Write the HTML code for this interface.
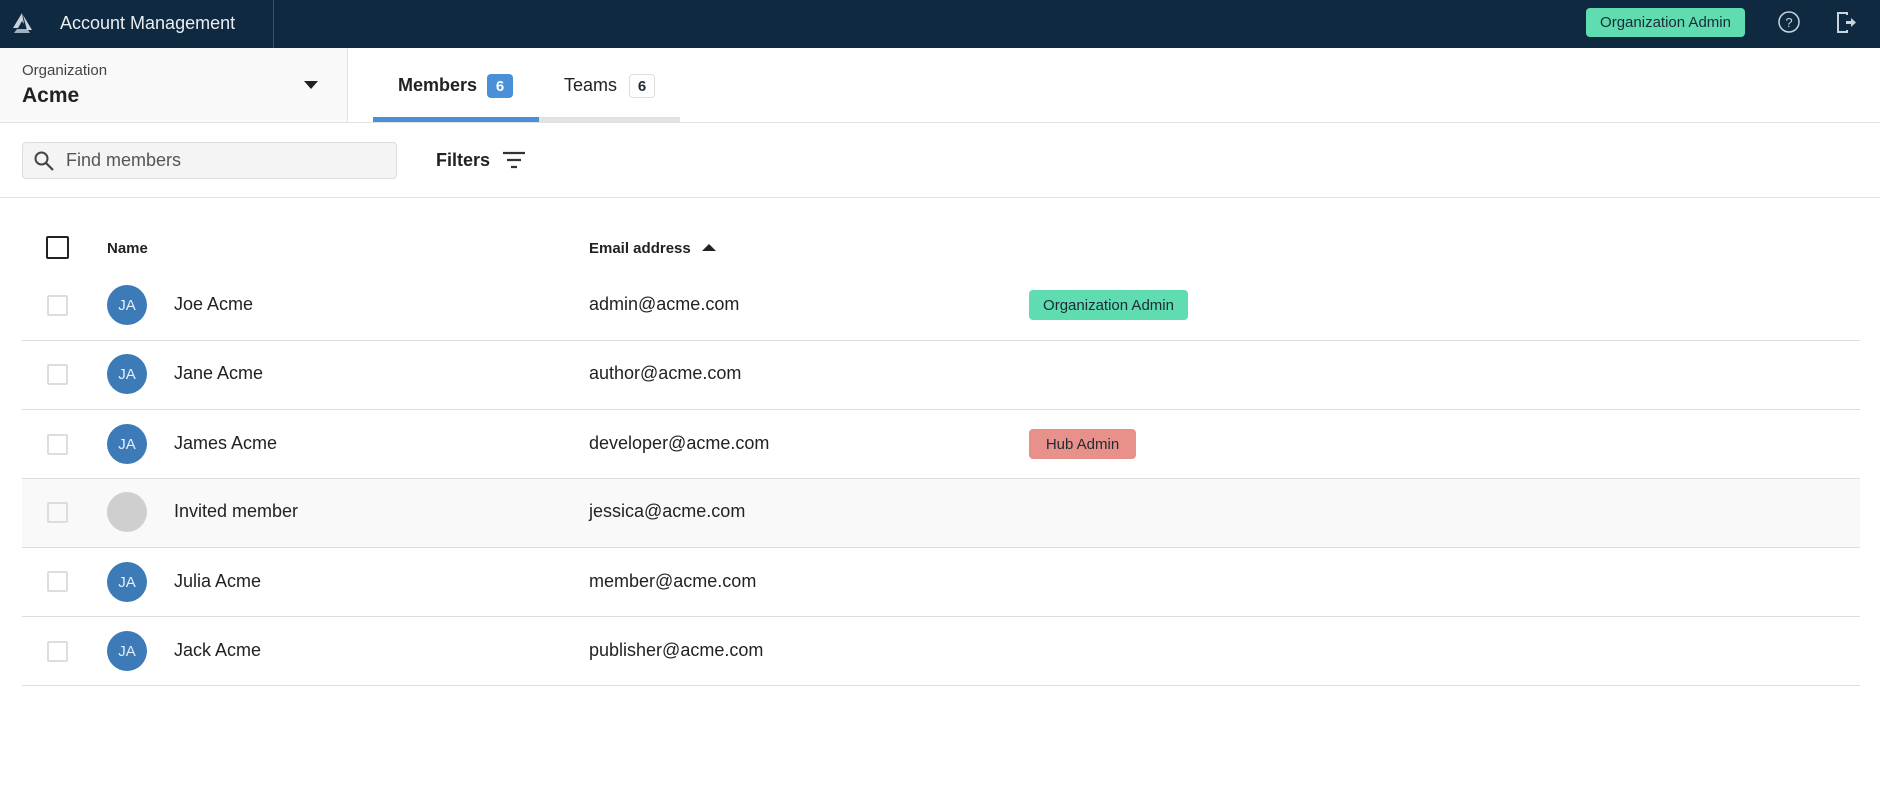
<!DOCTYPE html>
<html><head><meta charset="utf-8"><style>
*{box-sizing:border-box;margin:0;padding:0}
body{width:1880px;height:786px;background:#fff;font-family:"Liberation Sans",sans-serif;color:#222;position:relative;overflow:hidden}
.a{position:absolute}
.hdr{left:0;top:0;width:1880px;height:48px;background:#0f2a40}
.t{white-space:nowrap}
.badge{border-radius:4px;font-size:15px;display:flex;align-items:center;justify-content:center;color:#1d2b36}
.cb{width:21px;height:21px;border:2px solid #ddd;border-radius:2px;left:47px}
.av{width:40px;height:40px;border-radius:50%;background:#3d7ab8;color:#e6eef6;font-size:15px;display:flex;align-items:center;justify-content:center;left:107px}
.nm{left:174px;font-size:18px}
.em{left:589px;font-size:18px}
.ln{left:22px;width:1838px;height:1px;background:#ddd}
</style></head><body>
<div class="a hdr"></div>
<svg class="a" style="left:10px;top:12px" width="24" height="22" viewBox="0 0 24 22"><path d="M12 1 L3 16 L8 16 L12 9 L14 12 Z" fill="#c9d3dc"/><path d="M15 13 L20 21 L4 21 L7 17 L17 17 Z" fill="#9fb0be"/><path d="M13 3 L22 18 L17 18 Z" fill="#c9d3dc"/></svg>
<div class="a t" style="left:60px;top:13px;font-size:18px;color:#e8edf1">Account Management</div>
<div class="a" style="left:273px;top:0;width:1px;height:48px;background:#3a5164"></div>
<div class="a badge t" style="left:1586px;top:8px;width:159px;height:29px;background:#5fdcb0">Organization Admin</div>
<svg class="a" style="left:1777px;top:10px" width="24" height="24" viewBox="0 0 24 24"><circle cx="12" cy="12" r="10" fill="none" stroke="#c9d3dc" stroke-width="1.5"/><text x="12" y="17" text-anchor="middle" font-size="13" fill="#c9d3dc" font-family="Liberation Sans">?</text></svg>
<svg class="a" style="left:1834px;top:10px" width="26" height="26" viewBox="0 0 26 26"><path d="M13 5 V3 H4 V22 H13 V20" fill="none" stroke="#c9d3dc" stroke-width="2"/><path d="M12 11 H17 V8 L22 12.5 L17 17 V14 H12 Z" fill="#c9d3dc"/></svg>

<div class="a" style="left:0;top:48px;width:348px;height:74px;background:#f9f9f9;border-right:1px solid #e2e2e2"></div>
<div class="a t" style="left:22px;top:62px;font-size:15px;color:#444">Organization</div>
<div class="a t" style="left:22px;top:84px;font-size:21px;font-weight:bold">Acme</div>
<svg class="a" style="left:303px;top:80px" width="16" height="10"><path d="M1 1 H15 L8 9 Z" fill="#222"/></svg>
<div class="a t" style="left:398px;top:75px;font-size:18px;font-weight:bold">Members</div>
<div class="a badge" style="left:487px;top:74px;width:26px;height:24px;background:#4a90d9;color:#fff;font-weight:bold;font-size:15px">6</div>
<div class="a t" style="left:564px;top:75px;font-size:18px">Teams</div>
<div class="a badge" style="left:629px;top:74px;width:26px;height:24px;background:#fff;border:1px solid #ddd;font-weight:bold;font-size:15px">6</div>
<div class="a" style="left:373px;top:117px;width:166px;height:5px;background:#4a90d9"></div>
<div class="a" style="left:539px;top:117px;width:141px;height:5px;background:#e2e2e2"></div>
<div class="a" style="left:348px;top:122px;width:1532px;height:1px;background:#e2e2e2"></div>
<div class="a" style="left:0;top:122px;width:348px;height:1px;background:#e2e2e2"></div>

<div class="a" style="left:22px;top:142px;width:375px;height:37px;background:#f4f4f4;border:1px solid #ddd;border-radius:4px"></div>
<svg class="a" style="left:33px;top:150px" width="22" height="22" viewBox="0 0 22 22"><circle cx="8.5" cy="8.5" r="6" fill="none" stroke="#444" stroke-width="2"/><path d="M13 13 L20 20" stroke="#444" stroke-width="2.2"/></svg>
<div class="a t" style="left:66px;top:150px;font-size:18px;color:#555">Find members</div>
<div class="a t" style="left:436px;top:150px;font-size:18px;font-weight:bold">Filters</div>
<svg class="a" style="left:502px;top:151px" width="24" height="20"><path d="M1 2 H23 M5 9 H19 M9 16 H15" stroke="#333" stroke-width="2.2"/></svg>
<div class="a" style="left:0;top:197px;width:1880px;height:1px;background:#e2e2e2"></div>

<div class="a" style="left:46px;top:236px;width:23px;height:23px;border:2.5px solid #222;border-radius:2px"></div>
<div class="a t" style="left:107px;top:240px;font-size:15px;font-weight:bold">Name</div>
<div class="a t" style="left:589px;top:240px;font-size:15px;font-weight:bold">Email address</div>
<svg class="a" style="left:702px;top:243px" width="14" height="9"><path d="M0 8 H14 L7 1 Z" fill="#222"/></svg>

<div class="a" style="left:22px;top:479px;width:1838px;height:68px;background:#f9f9f9"></div>

<div class="a cb" style="top:295px"></div><div class="a av" style="top:285px">JA</div><div class="a t nm" style="top:294px">Joe Acme</div><div class="a t em" style="top:294px">admin@acme.com</div>
<div class="a badge t" style="left:1029px;top:290px;width:159px;height:30px;background:#5fdcb0">Organization Admin</div>
<div class="a ln" style="top:340px"></div>
<div class="a cb" style="top:364px"></div><div class="a av" style="top:354px">JA</div><div class="a t nm" style="top:363px">Jane Acme</div><div class="a t em" style="top:363px">author@acme.com</div>
<div class="a ln" style="top:409px"></div>
<div class="a cb" style="top:434px"></div><div class="a av" style="top:424px">JA</div><div class="a t nm" style="top:433px">James Acme</div><div class="a t em" style="top:433px">developer@acme.com</div>
<div class="a badge t" style="left:1029px;top:429px;width:107px;height:30px;background:#e8918a">Hub Admin</div>
<div class="a ln" style="top:478px"></div>
<div class="a cb" style="top:502px"></div><div class="a av" style="top:492px;background:#cfcfcf"></div><div class="a t nm" style="top:501px">Invited member</div><div class="a t em" style="top:501px">jessica@acme.com</div>
<div class="a ln" style="top:547px"></div>
<div class="a cb" style="top:571px"></div><div class="a av" style="top:562px">JA</div><div class="a t nm" style="top:571px">Julia Acme</div><div class="a t em" style="top:571px">member@acme.com</div>
<div class="a ln" style="top:616px"></div>
<div class="a cb" style="top:641px"></div><div class="a av" style="top:631px">JA</div><div class="a t nm" style="top:640px">Jack Acme</div><div class="a t em" style="top:640px">publisher@acme.com</div>
<div class="a ln" style="top:685px"></div>
</body></html>
